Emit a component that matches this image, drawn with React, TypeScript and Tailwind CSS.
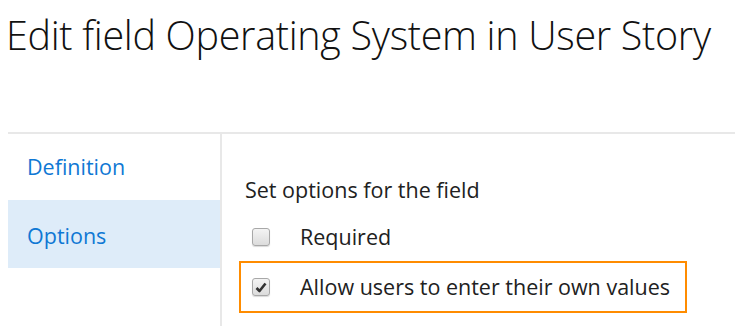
import React from 'react';

const font = { fontFamily: '"Open Sans", "Segoe UI", sans-serif' };

const Checkbox = ({ checked }: { checked?: boolean }) => (
  <span className="flex h-[18px] w-[18px] shrink-0 items-center justify-center rounded-[3px] border border-[#a8a8a8] bg-gradient-to-b from-[#f4f4f4] to-[#dcdcdc] shadow-[0_1px_1px_rgba(0,0,0,0.15)]">
    {checked && (
      <svg width="12" height="11" viewBox="0 0 12 11">
        <path d="M1.5 6 L4.5 9 L10.5 1.5" fill="none" stroke="#333" strokeWidth="2.6" strokeLinejoin="round" />
      </svg>
    )}
  </span>
);

export default function App() {
  const [tab, setTab] = React.useState('Options');
  const [required, setRequired] = React.useState(false);
  const [allowOwn, setAllowOwn] = React.useState(true);

  return (
    <div className="h-[326px] w-[735px] overflow-hidden bg-white text-[#212121]" style={font}>
      <h1 className="h-[132px] whitespace-nowrap pl-[6px] pt-[10px] text-[39.5px] font-light leading-[50px] tracking-[-0.3px] text-[#111]">
        Edit field Operating System in User Story
      </h1>

      <div className="ml-[8px] flex h-[194px] border-t-2 border-[#e8e8e8]">
        <nav className="w-[214px] shrink-0 border-r-2 border-[#e8e8e8]">
          {['Definition', 'Options'].map((t) => (
            <button
              key={t}
              onClick={() => setTab(t)}
              className={
                'flex w-full items-center pl-[19px] text-left text-[21.5px] text-[#0f78d4] ' +
                (t === 'Definition' ? 'h-[66px]' : 'h-[68px] pt-[4px]') +
                (tab === t ? ' bg-[#deecf9]' : '')
              }
            >
              {t}
            </button>
          ))}
        </nav>

        <div className="flex-1 pl-[17px] pt-[42px]">
          <p className="pl-[6px] text-[21.5px] leading-[28px]">Set options for the field</p>
          <label
            className="mt-[12px] flex h-[42px] cursor-pointer items-center pl-[13px] text-[21.5px]"
            onClick={() => setRequired((v) => !v)}
          >
            <Checkbox checked={required} />
            <span className="ml-[30px]">Required</span>
          </label>
          <label
            className="mt-[3px] flex h-[52px] w-[448px] cursor-pointer items-center border-2 border-[#ff8c00] pl-[11px] text-[21.5px]"
            onClick={() => setAllowOwn((v) => !v)}
          >
            <Checkbox checked={allowOwn} />
            <span className="ml-[30px] whitespace-nowrap">Allow users to enter their own values</span>
          </label>
        </div>
      </div>
    </div>
  );
}
